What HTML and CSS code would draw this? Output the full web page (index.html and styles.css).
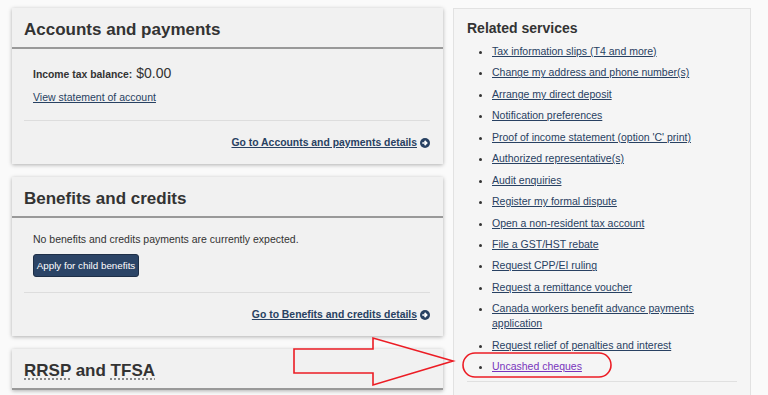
FILE: index.html
```html
<!DOCTYPE html>
<html lang="en">

<head>
     <meta charset="UTF-8">
     <meta name="viewport" content="width=device-width, initial-scale=1.0">
     <title>My Account</title>
     <link rel="stylesheet" href="styles.css">
</head>

<body>
     <div class="page">
          <main class="summary">
               <section class="card">
                    <h2 class="card-title">Accounts and payments</h2>
                    <div class="card-body">
                         <p class="balance"><strong>Income tax balance:</strong> <span>$0.00</span></p>
                         <p class="statement"><a href="#">View statement of account</a></p>
                    </div>
                    <div class="card-footer">
                         <a href="#" class="details">Go to Accounts and payments details</a>
                         <svg class="go-icon" viewBox="0 0 10 10" width="10" height="10">
                              <circle cx="5" cy="5" r="5" fill="#284162" />
                              <path d="M2.3 5h4.2M4.6 2.9L6.7 5 4.6 7.1" stroke="#fff" stroke-width="1.6" fill="none" />
                         </svg>
                    </div>
               </section>

               <section class="card">
                    <h2 class="card-title">Benefits and credits</h2>
                    <div class="card-body">
                         <p class="note">No benefits and credits payments are currently expected.</p>
                         <button class="btn">Apply for child benefits</button>
                    </div>
                    <div class="card-footer">
                         <a href="#" class="details">Go to Benefits and credits details</a>
                         <svg class="go-icon" viewBox="0 0 10 10" width="10" height="10">
                              <circle cx="5" cy="5" r="5" fill="#284162" />
                              <path d="M2.3 5h4.2M4.6 2.9L6.7 5 4.6 7.1" stroke="#fff" stroke-width="1.6" fill="none" />
                         </svg>
                    </div>
               </section>

               <section class="card">
                    <h2 class="card-title"><abbr title="Registered Retirement Savings Plan">RRSP</abbr> and <abbr title="Tax-Free Savings Account">TFSA</abbr></h2>
               </section>
          </main>

          <aside class="related">
               <h3>Related services</h3>
               <ul>
                    <li><a href="#">Tax information slips (T4 and more)</a></li>
                    <li><a href="#">Change my address and phone number(s)</a></li>
                    <li><a href="#">Arrange my direct deposit</a></li>
                    <li><a href="#">Notification preferences</a></li>
                    <li><a href="#">Proof of income statement (option 'C' print)</a></li>
                    <li><a href="#">Authorized representative(s)</a></li>
                    <li><a href="#">Audit enquiries</a></li>
                    <li><a href="#">Register my formal dispute</a></li>
                    <li><a href="#">Open a non-resident tax account</a></li>
                    <li><a href="#">File a GST/HST rebate</a></li>
                    <li><a href="#">Request CPP/EI ruling</a></li>
                    <li><a href="#">Request a remittance voucher</a></li>
                    <li><a href="#">Canada workers benefit advance payments application</a></li>
                    <li><a href="#">Request relief of penalties and interest</a></li>
                    <li><a href="#" class="visited">Uncashed cheques</a></li>
               </ul>
               <hr>
          </aside>
     </div>

     <!-- red annotation drawn over the screenshot -->
     <svg class="annotation" width="768" height="395" viewBox="0 0 768 395">
          <polygon points="294,349 373,349 373,338 453,361 373,385 373,373 294,373" fill="none" stroke="#ec1c24" stroke-width="1.6" />
          <rect x="463" y="353" width="148" height="24" rx="12" fill="none" stroke="#ec1c24" stroke-width="1.6" />
     </svg>
</body>

</html>
```

FILE: styles.css
```css
body {
     font-family: "Liberation Sans", Arial, sans-serif;
     margin: 0;
     padding: 0;
     background-color: #fafafa;
     color: #333;
     overflow: hidden;
}

p {
     margin: 0;
}

a {
     color: #284162;
}

.page {
     display: flex;
     gap: 10px;
     padding: 8px 17px 0 12px;
}

.summary {
     width: 431px;
     display: flex;
     flex-direction: column;
     gap: 13px;
}

.card {
     background-color: #f1f1f1;
     box-shadow: 0 1px 4px rgba(0, 0, 0, 0.3);
}

.card-title {
     margin: 0;
     padding: 10px 12px 5px;
     font-size: 17px;
     line-height: 24px;
     border-bottom: 2px solid #999;
}

.card-title abbr {
     text-decoration: underline dotted #777;
     text-underline-offset: 3px;
}

.card-body {
     margin: 0 13px 0 12px;
     padding: 0 0 13px 9px;
     border-bottom: 1px solid #ddd;
}

.balance {
     padding-top: 14px;
     font-size: 14px;
     line-height: 20px;
     height: 20px;
}

.balance strong {
     font-size: 10.4px;
     line-height: 1;
}

.statement {
     margin-top: 4px;
     font-size: 10.5px;
     line-height: 20px;
}

.note {
     padding-top: 12px;
     font-size: 10.5px;
     line-height: 18px;
}

.btn {
     display: block;
     margin-top: 6px;
     margin-bottom: 2px;
     background-color: #2b4466;
     color: #fff;
     border: 1px solid #1e2f47;
     border-radius: 3px;
     font-family: inherit;
     font-size: 9.8px;
     width: 106px;
     height: 23px;
     padding: 0;
     white-space: nowrap;
}

.card-footer {
     display: flex;
     justify-content: flex-end;
     align-items: center;
     gap: 3px;
     padding: 13px 13px 12px;
     font-size: 10.4px;
     line-height: 18px;
}

.details {
     font-weight: bold;
}

.related {
     width: 298px;
     height: 400px;
     box-sizing: border-box;
     background-color: #f5f5f5;
     border: 1px solid #e2e2e2;
     padding: 9px 13px 0 13px;
}

.related h3 {
     margin: 0;
     font-size: 14px;
     line-height: 20px;
}

.related ul {
     margin: 6px 0 0;
     padding-left: 25px;
     font-size: 10.5px;
     line-height: 15px;
}

.related li {
     margin-bottom: 6.45px;
}

.related a.visited {
     color: #7834bc;
}

.related hr {
     border: none;
     border-top: 1px solid #e0e0e0;
     margin: 1px 0 0;
}

.annotation {
     position: absolute;
     top: 0;
     left: 0;
     pointer-events: none;
}
```
